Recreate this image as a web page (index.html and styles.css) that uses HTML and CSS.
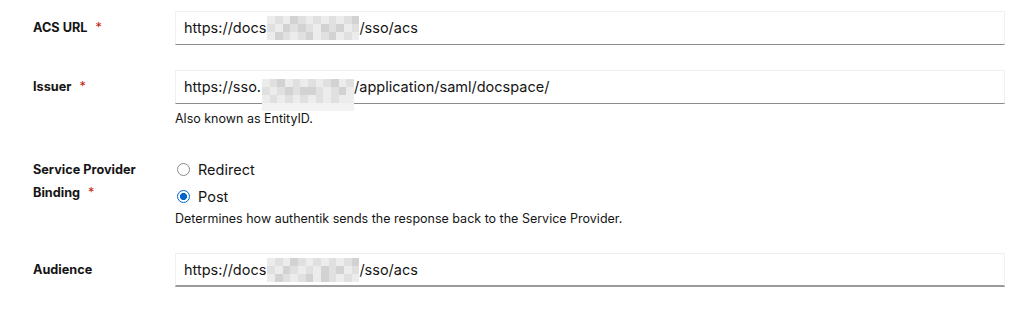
FILE: index.html
```html
<!DOCTYPE html>
<html>
<head>
<meta charset="utf-8">
<link rel="stylesheet" href="styles.css">
</head>
<body>
<form class="form">
  <div class="row">
    <label class="label">ACS URL <span class="req">*</span></label>
    <div class="control">
      <div class="input">https://docs<span class="blur w92"><i class="s1"></i><i class="s2"></i><i class="s1"></i><i class="s3"></i><i class="s2"></i><i class="s1"></i><i class="s2"></i><i class="s1"></i><i class="s2"></i><i class="s1"></i><i class="s2"></i><i class="s3"></i><i class="s2"></i><i class="s1"></i><i class="s3"></i><i class="s2"></i><i class="s3"></i><i class="s2"></i><i class="s1"></i><i class="s3"></i><i class="s2"></i><i class="s3"></i><i class="s1"></i><i class="s2"></i><i class="s1"></i><i class="s3"></i><i class="s2"></i><i class="s1"></i><i class="s2"></i><i class="s3"></i><i class="s1"></i><i class="s2"></i><i class="s3"></i><i class="s1"></i><i class="s2"></i><i class="s1"></i></span>/sso/acs</div>
    </div>
  </div>

  <div class="row">
    <label class="label">Issuer <span class="req">*</span></label>
    <div class="control">
      <div class="input">https://sso.<span class="blur w92 tall"><i class="s1"></i><i class="s2"></i><i class="s3"></i><i class="s1"></i><i class="s2"></i><i class="s1"></i><i class="s2"></i><i class="s1"></i><i class="s2"></i><i class="s3"></i><i class="s1"></i><i class="s2"></i><i class="s2"></i><i class="s1"></i><i class="s2"></i><i class="s3"></i><i class="s2"></i><i class="s3"></i><i class="s3"></i><i class="s2"></i><i class="s1"></i><i class="s2"></i><i class="s3"></i><i class="s1"></i><i class="s1"></i><i class="s2"></i><i class="s1"></i><i class="s2"></i><i class="s1"></i><i class="s2"></i><i class="s1"></i><i class="s2"></i><i class="s1"></i><i class="s2"></i><i class="s1"></i><i class="s1"></i><i class="s0"></i><i class="s0"></i><i class="s0"></i><i class="s0"></i><i class="s0"></i><i class="s0"></i><i class="s0"></i><i class="s0"></i><i class="s0"></i><i class="s0"></i><i class="s0"></i><i class="s0"></i></span>/application/saml/docspace/</div>
      <div class="helper">Also known as EntityID.</div>
    </div>
  </div>

  <div class="row group">
    <label class="label multi">Service Provider<br>Binding <span class="req">*</span></label>
    <div class="control">
      <div class="radio"><span class="dot"></span>Redirect</div>
      <div class="radio"><span class="dot on"></span>Post</div>
      <div class="helper tight">Determines how authentik sends the response back to the Service Provider.</div>
    </div>
  </div>

  <div class="row last">
    <label class="label">Audience</label>
    <div class="control">
      <div class="input strong">https://docs<span class="blur w92"><i class="s1"></i><i class="s2"></i><i class="s1"></i><i class="s3"></i><i class="s2"></i><i class="s1"></i><i class="s2"></i><i class="s1"></i><i class="s2"></i><i class="s1"></i><i class="s2"></i><i class="s3"></i><i class="s2"></i><i class="s1"></i><i class="s3"></i><i class="s2"></i><i class="s1"></i><i class="s2"></i><i class="s1"></i><i class="s3"></i><i class="s2"></i><i class="s3"></i><i class="s1"></i><i class="s2"></i><i class="s1"></i><i class="s3"></i><i class="s2"></i><i class="s1"></i><i class="s2"></i><i class="s3"></i><i class="s1"></i><i class="s3"></i><i class="s2"></i><i class="s1"></i><i class="s2"></i><i class="s1"></i></span>/sso/acs</div>
    </div>
  </div>
</form>
</body>
</html>
```

FILE: styles.css
```css
html, body {
  margin: 0;
  padding: 0;
  background: #ffffff;
}
body {
  font-family: Inter, "Noto Sans", "Liberation Sans", sans-serif;
  color: #151515;
}
.form {
  display: flex;
  flex-direction: column;
  gap: 25px;
  padding: 11px 19px 0 33px;
}
.row {
  display: grid;
  grid-template-columns: 142px 1fr;
  align-items: start;
}
.label {
  font-size: 12.7px;
  font-weight: 700;
  line-height: 34px;
  color: #151515;
}
.label.multi {
  line-height: 23px;
  padding-top: 2px;
}
.req {
  color: #c9190b;
  margin-left: 5px;
  font-weight: 400;
}
.control {
  display: flex;
  flex-direction: column;
}
.input {
  position: relative;
  height: 34px;
  box-sizing: border-box;
  border: 1px solid #f0f0f0;
  border-bottom: 1px solid #8a8d90;
  padding: 0 8px;
  font-size: 14.5px;
  line-height: 32px;
  display: flex;
  align-items: center;
  white-space: nowrap;
}
.input.strong {
  border-bottom: 2px solid #9a9a9a;
}
.blur {
  display: grid;
  grid-template-columns: repeat(12, 1fr);
  grid-auto-rows: 8px;
  height: 24px;
  align-self: center;
  margin-left: 1px;
}
.blur.w92 { width: 92px; }
.blur.tall {
  height: 32px;
  grid-template-rows: 8px 8px 8px 8px;
  align-self: flex-start;
  margin-top: 8px;
  position: relative;
  z-index: 1;
  margin-bottom: -10px;
}
.blur i { display: block; }
.s0 { background: #f2f2f2; }
.s1 { background: #ececec; }
.s2 { background: #e0e0e0; }
.s3 { background: #d2d2d2; }
.helper {
  font-size: 12.5px;
  color: #151515;
  margin-top: 7px;
  line-height: 16px;
}
.helper.tight { margin-top: 1px; }
.group { margin-top: 4px; }
.last { margin-top: 1px; }
.radio {
  display: flex;
  align-items: center;
  font-size: 14.5px;
  line-height: 23px;
  height: 27px;
}
.dot {
  width: 13px;
  height: 13px;
  box-sizing: border-box;
  border: 1.5px solid #8a8d90;
  border-radius: 50%;
  margin: 0 8px 0 2px;
  flex: none;
}
.dot.on {
  border-color: #0066cc;
  background: radial-gradient(circle, #0066cc 0 3.3px, #ffffff 3.8px);
}
```
